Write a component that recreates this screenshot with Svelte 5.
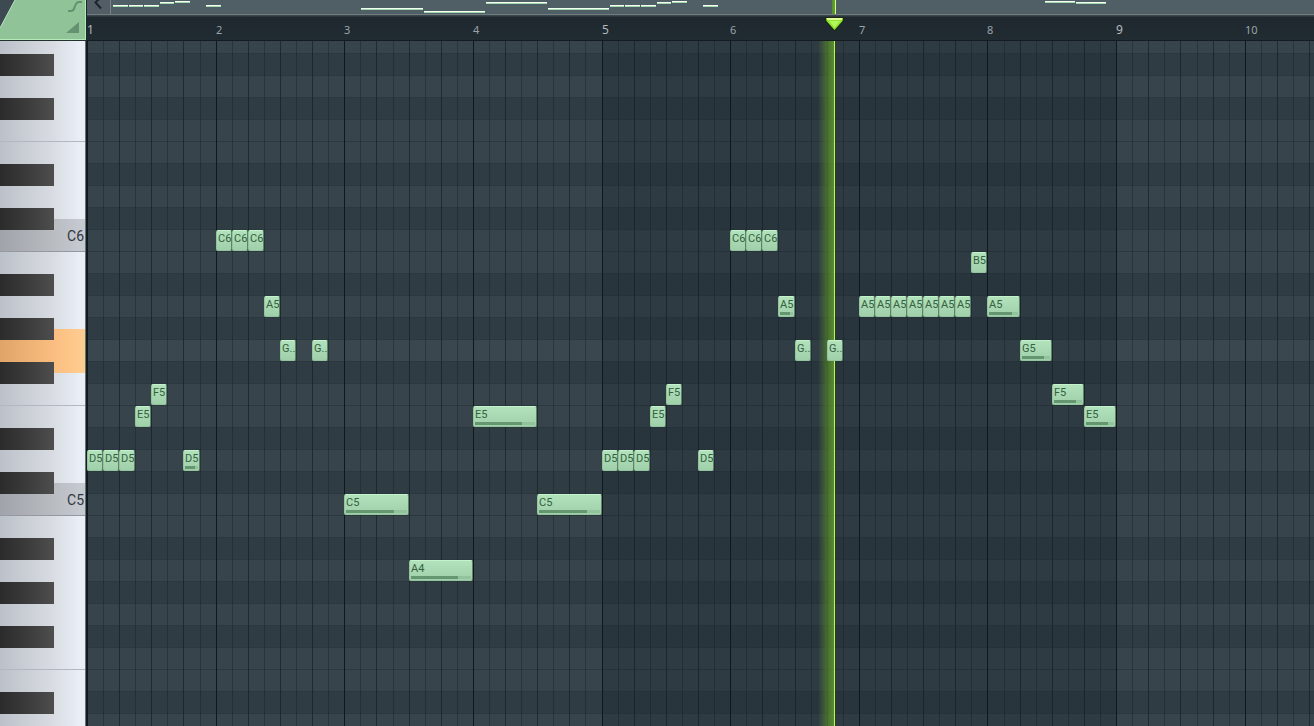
<script>
  // Steps are eighths of a bar, rows are semitones.
  const STEP = 16.08;
  const MINI_STEP = 15.53;
  const ROW = 22;
  const TOP_PITCH = 93; // A6
  const ROWS = 32;
  const BLACK = [1, 3, 6, 8, 10];
  const NAMES = ["C", "C#", "D", "D#", "E", "F", "F#", "G", "G#", "A", "A#", "B"];

  let playhead = $state(46.5);
  let pressed = $state(79);
  let rulerWidth = $state(0);

  // [pitch, start, length]
  const score = [
    [74, 0, 1], [74, 1, 1], [74, 2, 1], [76, 3, 1], [77, 4, 1], [74, 6, 1],
    [84, 8, 1], [84, 9, 1], [84, 10, 1], [81, 11, 1], [79, 12, 1], [79, 14, 1],
    [72, 16, 4], [69, 20, 4], [76, 24, 4], [72, 28, 4],
    [74, 32, 1], [74, 33, 1], [74, 34, 1], [76, 35, 1], [77, 36, 1], [74, 38, 1],
    [84, 40, 1], [84, 41, 1], [84, 42, 1], [81, 43, 1], [79, 44, 1], [79, 46, 1],
    [81, 48, 1], [81, 49, 1], [81, 50, 1], [81, 51, 1], [81, 52, 1], [81, 53, 1],
    [81, 54, 1], [83, 55, 1], [81, 56, 2], [79, 58, 2], [77, 60, 2], [76, 62, 2],
  ];

  const x = (step) => Math.round(step * STEP);
  const miniX = (step) => Math.round(step * MINI_STEP);
  const isBlack = (pitch) => BLACK.includes(pitch % 12);
  const nameOf = (pitch) => NAMES[pitch % 12] + (Math.floor(pitch / 12) - 1);

  const rows = Array.from({ length: ROWS }, (_, i) => TOP_PITCH - i);
  const whiteKeys = rows.filter((p) => !isBlack(p));

  // only as many bars as fit whole numbers in the ruler
  const steps = $derived(Array.from({ length: Math.ceil(rulerWidth / STEP) }, (_, i) => i));
  const bars = $derived(steps.filter((s) => s % 8 === 0 && x(s) + 18 < rulerWidth).map((s) => s / 8));

  const notes = score.map(([pitch, start, len]) => {
    const left = x(start);
    const width = x(start + len) - left;
    const name = nameOf(pitch);
    return {
      left,
      width,
      top: (TOP_PITCH - pitch) * ROW,
      label: len === 1 && name[0] === "G" ? "G.." : name,
      slider: width > 16,
    };
  });

  const overview = score
    .map(([pitch, start, len]) => ({
      left: miniX(start),
      width: miniX(start + len) - miniX(start) - 1,
      top: Math.round(7.5 - (pitch - 72) * 1.3),
    }))
    .filter((n) => n.top >= 0);

  function keyShape(pitch) {
    const up = isBlack(pitch + 1);
    const down = isBlack(pitch + 11);
    return up && down ? "wide" : "narrow";
  }
</script>

<main class="roll">
  <header>
    <div class="corner">
      <svg class="corner-bg" width="86" height="41" viewBox="0 0 86 41">
        <rect width="86" height="41" fill="#91c398" />
        <path d="M0 0H15L0 28Z" fill="#3e4a52" />
        <path d="M15 0L0 28" stroke="#b9e6bf" fill="none" />
        <path d="M0 39.5H85.5V0" stroke="#b4ecb9" fill="none" />
        <path d="M0 40.5H86" stroke="#23312f" />
        <path d="M68 11H71C74 11 74 9 75 6C76 3 77 2 79 2H82" stroke="#649270" stroke-width="2" fill="none" />
        <path d="M66 33L79 22V33Z" fill="#649270" />
      </svg>
    </div>
    <div class="timeline">
      <div class="overview">
        <button class="back" aria-label="Scroll left">
          <svg width="24" height="14" viewBox="0 0 24 14">
            <path d="M14 -3L8.5 2.5L14 8.5" stroke="#1c252b" stroke-width="2" fill="none" />
          </svg>
        </button>
        <div class="mini">
          {#each overview as n}
            <i class="mini-note" style="left:{n.left}px; top:{n.top}px; width:{n.width}px"></i>
          {/each}
          <i class="mini-head" style="left:{miniX(playhead)}px"></i>
        </div>
      </div>
      <div class="ruler" bind:clientWidth={rulerWidth}>
        {#each bars as b}
          <span class="bar-no" class:major={b % 4 === 0} style="left:{x(b * 8)}px">{b + 1}</span>
        {/each}
        <svg class="marker" style="left:{x(playhead)}px" width="20" height="15" viewBox="0 0 20 15">
          <path d="M0 0H19V4L9.5 15L0 4Z" fill="#1c2a16" />
          <path d="M1 1H18L17.5 4L9.5 13L1.5 4Z" fill="#8fe62e" />
          <path d="M2 2H17" stroke="#e4ff9a" stroke-width="2" />
          <path d="M4 4H15L9.5 10.5Z" fill="#b2f75a" />
        </svg>
      </div>
    </div>
  </header>

  <div class="body">
    <div class="keys">
      <div class="whites">
        {#each whiteKeys as p}
          <button
            class="white {keyShape(p)}"
            class:root={p % 12 === 0}
            class:pressed={p === pressed}
            class:edge={p % 12 === 0 || p % 12 === 5}
            aria-label={nameOf(p)}
            onclick={() => (pressed = p)}
          >
            {#if p % 12 === 0}<span>{nameOf(p)}</span>{/if}
          </button>
        {/each}
      </div>
      {#each rows as p, i}
        {#if isBlack(p)}
          <button
            class="black"
            style="top:{i * ROW - 9}px"
            aria-label={nameOf(p)}
            onclick={() => (pressed = p)}
          ></button>
        {/if}
      {/each}
    </div>

    <div class="grid">
      <div class="canvas">
        {#each rows as p}
          <div class="row" class:dark={isBlack(p)} class:lit={p === pressed}></div>
        {/each}
        <div class="section" style="left:{x(32)}px; width:{x(64) - x(32)}px"></div>
        {#each steps as s}
          <i class="line" class:half={s % 2 === 0} class:bar={s % 8 === 0} style="left:{x(s)}px"></i>
        {/each}
        <div class="playhead" style="left:{x(playhead)}px"></div>
        {#each notes as n}
          <div class="note" style="left:{n.left}px; top:{n.top}px; width:{n.width}px">
            {n.label}
            {#if n.slider}<i class="slider"></i>{/if}
          </div>
        {/each}
      </div>
    </div>
  </div>
</main>

<style>
  :global(body) {
    background: #2f3b42;
  }
  .roll {
    display: flex;
    flex-direction: column;
    height: 100vh;
    overflow: hidden;
    font-family: "Roboto", "Liberation Sans", sans-serif;
  }
  button {
    margin: 0;
    padding: 0;
    border: 0;
    font: inherit;
  }
  header {
    display: flex;
    flex: none;
  }
  .corner {
    width: 86px;
    flex: none;
  }
  .corner-bg {
    display: block;
  }
  .timeline {
    flex: 1;
    min-width: 0;
    border-left: 1px solid #1b252b;
  }
  .overview {
    display: flex;
    height: 14px;
    background: #505e66;
    border-bottom: 1px solid #727d7d;
    overflow: hidden;
  }
  .back {
    width: 24px;
    flex: none;
    background: #535d65;
    border-right: 1px solid #77828a;
  }
  .back svg {
    display: block;
  }
  .mini {
    position: relative;
    flex: 1;
    margin-left: 2px;
    overflow: hidden;
  }
  .mini-note {
    position: absolute;
    height: 1px;
    background: #f2fff2;
    border-bottom: 1px solid #a5d9b0;
  }
  .mini-head {
    position: absolute;
    top: 0;
    bottom: 0;
    width: 4px;
    margin-left: -3px;
    background: linear-gradient(90deg, #558a35, #62a432 75%, #d5ff74 75%);
  }
  .ruler {
    position: relative;
    height: 25px;
    background: linear-gradient(#3a464e 0 1px, #1f282f 2px, #212b32);
    border-bottom: 1px solid #141c21;
    overflow: hidden;
  }
  .bar-no {
    position: absolute;
    top: 7px;
    font: 11px/16px "Noto Sans", "Open Sans", sans-serif;
    color: #9aa3a8;
  }
  .bar-no.major {
    font-size: 12px;
    color: #b3babe;
  }
  .marker {
    position: absolute;
    top: 2px;
    margin-left: -10px;
  }
  .body {
    display: flex;
    flex: 1;
    min-height: 0;
  }
  .keys {
    position: relative;
    width: 85px;
    flex: none;
    overflow: hidden;
    border-right: 1px solid #65736f;
  }
  .whites {
    display: flex;
    flex-direction: column;
    margin-top: -20px;
  }
  .white {
    display: flex;
    justify-content: flex-end;
    align-items: flex-start;
    flex: none;
    box-sizing: border-box;
    padding: 7px 1px 0 0;
    background: linear-gradient(90deg, #bcc0c8, #d9dde3 54px, #e9eef7 80px);
    font-size: 14px;
    line-height: 20px;
    color: #33373f;
  }
  .white.wide {
    height: 44px;
  }
  .white.narrow {
    height: 33px;
  }
  .white.edge {
    border-bottom: 1px solid #b3b7bf;
  }
  .white.root {
    background: linear-gradient(90deg, #a0a3a9, #b9bcc1 54px, #c5c9d0 80px);
    border-color: #9498a0;
  }
  .white.pressed {
    background: linear-gradient(90deg, #dfa468, #fbbe80 54px, #ffcc90 82px);
  }
  .black {
    position: absolute;
    left: 0;
    width: 54px;
    height: 22px;
    background: linear-gradient(90deg, #2b2b2c, #3b3b3c 50%, #4e4e4f);
  }
  .grid {
    flex: 1;
    min-width: 0;
    overflow: hidden;
    border-left: 1px solid #141d21;
  }
  .canvas {
    position: relative;
    margin-top: -9px;
  }
  .row {
    height: 21px;
    background: #37444b;
    border-bottom: 1px solid #2c383f;
  }
  .row.dark {
    background: #303c43;
  }
  .row.lit {
    background: #3a474e;
  }
  .section {
    position: absolute;
    top: 0;
    bottom: 0;
    background: rgba(20, 33, 44, 0.25);
  }
  .line {
    position: absolute;
    top: 0;
    bottom: 0;
    width: 1px;
    background: rgba(15, 26, 32, 0.35);
  }
  .line.half {
    background: rgba(15, 26, 32, 0.6);
  }
  .line.bar {
    background: #0f181d;
  }
  .playhead {
    position: absolute;
    top: 0;
    bottom: 0;
    width: 16px;
    margin-left: -17px;
    background: linear-gradient(90deg, rgba(92, 150, 40, 0), rgba(92, 150, 40, 0.5) 50%, rgba(98, 155, 38, 0.85));
    border-right: 1px solid #b6f953;
  }
  .note {
    position: absolute;
    box-sizing: border-box;
    height: 21px;
    padding-left: 1px;
    overflow: hidden;
    border: 1px solid #94c49d;
    border-top-color: #c3f2cb;
    border-right-color: #5f8268;
    border-radius: 2px;
    background: linear-gradient(#b1e2bb, #a0d0aa);
    font-size: 11px;
    line-height: 15px;
    white-space: nowrap;
    color: #35603f;
  }
  .slider {
    position: absolute;
    left: 1px;
    right: 1px;
    bottom: 1px;
    height: 3px;
    background: linear-gradient(90deg, #649670 78%, #92c39c 78%);
  }
</style>
